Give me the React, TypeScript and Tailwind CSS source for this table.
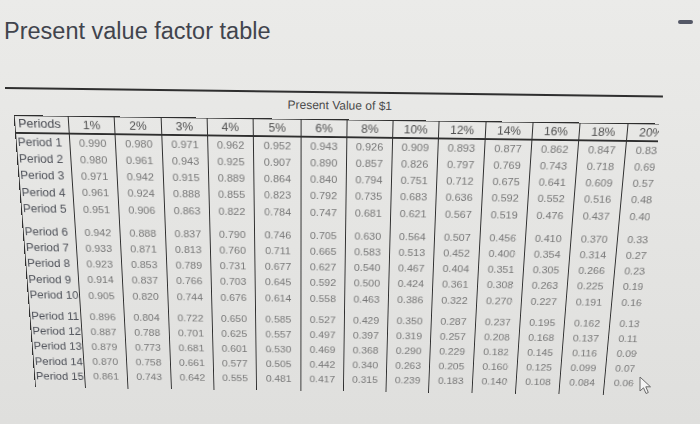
import React from 'react';

const rates = [1, 2, 3, 4, 5, 6, 8, 10, 12, 14, 16, 18, 20];

// column widths measured off the header dividers
const colW = [
  'w-[46px]', 'w-[47px]', 'w-[46px]', 'w-[46px]', 'w-[48px]', 'w-[46px]', 'w-[46px]',
  'w-[46px]', 'w-[47px]', 'w-[47px]', 'w-[47px]', 'w-[48px]', 'w-[48px]',
];

const groups = [
  [1, 2, 3, 4, 5],
  [6, 7, 8, 9, 10],
  [11, 12, 13, 14, 15],
];
const groupGap = ['mb-[8px]', 'mb-[7px]', 'mb-[5px]'];

const pv = (rate: number, n: number) => (1 / Math.pow(1 + rate / 100, n)).toFixed(3);

const line = 'border-[#2e2e2e]';

export default function App() {
  return (
    <div
      className="relative w-[700px] h-[424px] overflow-hidden bg-linear-to-b from-[#ebebe9] to-[#dfdfdd]"
      style={{ fontFamily: '"Liberation Sans", Arial, sans-serif' }}
    >
      {/* Title row */}
      <div className="flex items-start justify-between pt-[17px] pl-[4px]">
        <h1 className="text-[23.5px] leading-[28px] font-normal text-[#41444d]">
          Present value factor table
        </h1>
        <div className="mt-[3px] mr-[7px] w-[15px] h-[4px] rounded-sm bg-[#545866]" />
      </div>

      {/* Table section (photo is slightly rotated) */}
      <div className="ml-[5px] mt-[42px] w-[658px] origin-top-left [transform:rotate(0.75deg)]">
        <div className="h-[1.5px] bg-[#2f2f2f]" />
        <div className="mt-[5px] pl-[12px] text-center text-[12px] leading-[14px] text-[#4a4a4a]">
          Present Value of $1
        </div>

        <div className="ml-[9px] mt-[7.5px] [perspective:1315px] [perspective-origin:332px_0px]">
          <div className={`w-[646px] flex overflow-hidden border-t border-l ${line} origin-top [transform:rotateX(-20deg)]`}>
            {/* Periods column */}
            <div className={`shrink-0 w-[54px] border-r ${line}`}>
              <div className={`h-[19px] border-b-2 ${line} flex items-center pl-[3px] text-[12.5px] text-[#44464d]`}>
                Periods
              </div>
              {groups.map((g, gi) => (
                <div key={gi} className={groupGap[gi]}>
                  {g.map(n => (
                    <div key={n} className="h-[18.2px] flex items-center pl-px text-[12px] text-[#4d5058] whitespace-nowrap">
                      Period {n}
                    </div>
                  ))}
                </div>
              ))}
            </div>

            {/* Rate columns */}
            {rates.map((r, ci) => (
              <div key={r} className={`shrink-0 ${colW[ci]} border-r ${line}`}>
                <div className={`h-[19px] border-b-2 ${line} flex items-center justify-center text-[12px] text-[#505050]`}>
                  {r}%
                </div>
                {groups.map((g, gi) => (
                  <div key={gi} className={groupGap[gi]}>
                    {g.map(n => (
                      <div key={n} className="h-[18.2px] flex items-center justify-center text-[11px] text-[#777777]">
                        {pv(r, n)}
                      </div>
                    ))}
                  </div>
                ))}
              </div>
            ))}
          </div>
        </div>
      </div>

      {/* Mouse pointer */}
      <svg className="absolute left-[639px] top-[376px]" width="14" height="19" viewBox="0 0 14 19">
        <path
          d="M1 1 L1 15 L4.5 11.8 L7 17.5 L9.3 16.5 L6.8 10.8 L11.5 10.8 Z"
          fill="#f4f4f4"
          stroke="#6a6a6a"
          strokeWidth="1"
          strokeLinejoin="round"
        />
      </svg>
    </div>
  );
}
